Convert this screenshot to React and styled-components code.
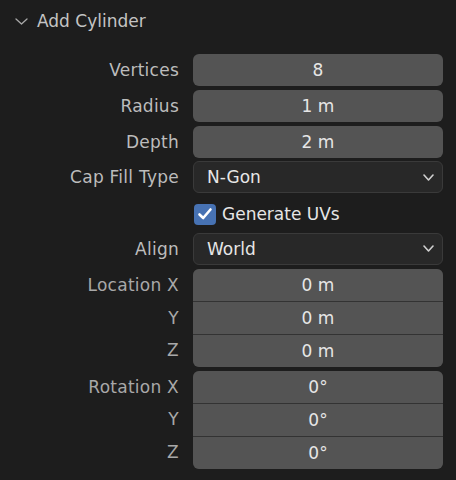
import React from 'react';
import styled, { createGlobalStyle } from 'styled-components';

const GlobalStyle = createGlobalStyle`
  html, body {
    margin: 0;
    padding: 0;
    background: #1d1d1d;
  }
  * { box-sizing: border-box; }
`;

const Panel = styled.div`
  width: 456px;
  height: 480px;
  background: #1d1d1d;
  font-family: "DejaVu Sans", "Liberation Sans", sans-serif;
  font-size: 17px;
  color: #b9b9b9;
  overflow: hidden;
`;

const Header = styled.div`
  height: 42px;
  display: flex;
  align-items: center;
  padding-left: 15px;
  gap: 9px;
  color: #c4c4c4;
`;

const Form = styled.div`
  margin-top: 12px;
  display: flex;
  flex-direction: column;
  gap: 3.8px;
`;

const Row = styled.div`
  display: grid;
  grid-template-columns: 193px 250px;
  height: 32px;
  align-items: center;
`;

const Label = styled.div`
  text-align: right;
  padding-right: 14px;
  white-space: nowrap;
  letter-spacing: 0.25px;
  color: ${p => p.$dim ? '#a8a8a8' : '#bcbcbc'};
`;

const Field = styled.div`
  height: 32px;
  background: #545454;
  border-radius: 6px;
  display: flex;
  align-items: center;
  justify-content: center;
  color: #e6e6e6;
`;

const Select = styled.div`
  height: 32px;
  background: #282828;
  border: 1px solid #3a3a3a;
  border-radius: 6px;
  display: flex;
  align-items: center;
  justify-content: space-between;
  padding: 0 8px 0 13px;
  color: #e6e6e6;
`;

const Check = styled.div`
  display: flex;
  align-items: center;
  gap: 6px;
  color: #e6e6e6;
  padding-left: 1px;
  padding-top: 2px;
`;

const Box = styled.div`
  width: 22px;
  height: 21px;
  border-radius: 4px;
  background: #4772b3;
  display: flex;
  align-items: center;
  justify-content: center;
`;

const Group = styled.div`
  display: grid;
  grid-template-columns: 193px 250px;
`;

const LabelStack = styled.div`
  display: flex;
  flex-direction: column;
`;

const StackLabel = styled(Label)`
  height: 32.6px;
  display: flex;
  align-items: center;
  justify-content: flex-end;
`;

const FieldStack = styled.div`
  border-radius: 6px;
  overflow: hidden;
  display: flex;
  flex-direction: column;
  gap: 1px;
  background: #333333;
`;

const StackField = styled(Field)`
  height: 32px;
  border-radius: 0;
`;

const Chevron = ({ w = 13, h = 7, color = '#a8a8a8', sw = 1.3 }) => (
  <svg width={w} height={h} viewBox={`0 0 ${w} ${h}`} fill="none">
    <path d={`M1 1 L${w / 2} ${h - 1} L${w - 1} 1`} stroke={color} strokeWidth={sw} strokeLinecap="round" strokeLinejoin="round" />
  </svg>
);

const Tick = () => (
  <svg width="16" height="14" viewBox="0 0 16 14" fill="none">
    <path d="M2.5 7.5 L6.2 11 L13.5 2.5" stroke="#ffffff" strokeWidth="2.6" strokeLinecap="round" strokeLinejoin="round" />
  </svg>
);

const FieldGroup = ({ label, values }) => (
  <Group>
    <LabelStack>
      {values.map((_, i) => (
        <StackLabel key={i} $dim>{i === 0 ? `${label} X` : i === 1 ? 'Y' : 'Z'}</StackLabel>
      ))}
    </LabelStack>
    <FieldStack>
      {values.map((v, i) => <StackField key={i}>{v}</StackField>)}
    </FieldStack>
  </Group>
);

export default function App() {
  return (
    <Panel>
      <GlobalStyle />
      <Header>
        <Chevron />
        <span>Add Cylinder</span>
      </Header>
      <Form>
        <Row>
          <Label>Vertices</Label>
          <Field>8</Field>
        </Row>
        <Row>
          <Label>Radius</Label>
          <Field>1 m</Field>
        </Row>
        <Row>
          <Label>Depth</Label>
          <Field>2 m</Field>
        </Row>
        <Row>
          <Label>Cap Fill Type</Label>
          <Select>
            <span>N-Gon</span>
            <Chevron w={11} h={7} color="#d0d0d0" sw={1.6} />
          </Select>
        </Row>
        <Row>
          <span />
          <Check>
            <Box><Tick /></Box>
            <span>Generate UVs</span>
          </Check>
        </Row>
        <Row>
          <Label>Align</Label>
          <Select>
            <span>World</span>
            <Chevron w={11} h={7} color="#d0d0d0" sw={1.6} />
          </Select>
        </Row>
        <FieldGroup label="Location" values={['0 m', '0 m', '0 m']} />
        <FieldGroup label="Rotation" values={['0°', '0°', '0°']} />
      </Form>
    </Panel>
  );
}
